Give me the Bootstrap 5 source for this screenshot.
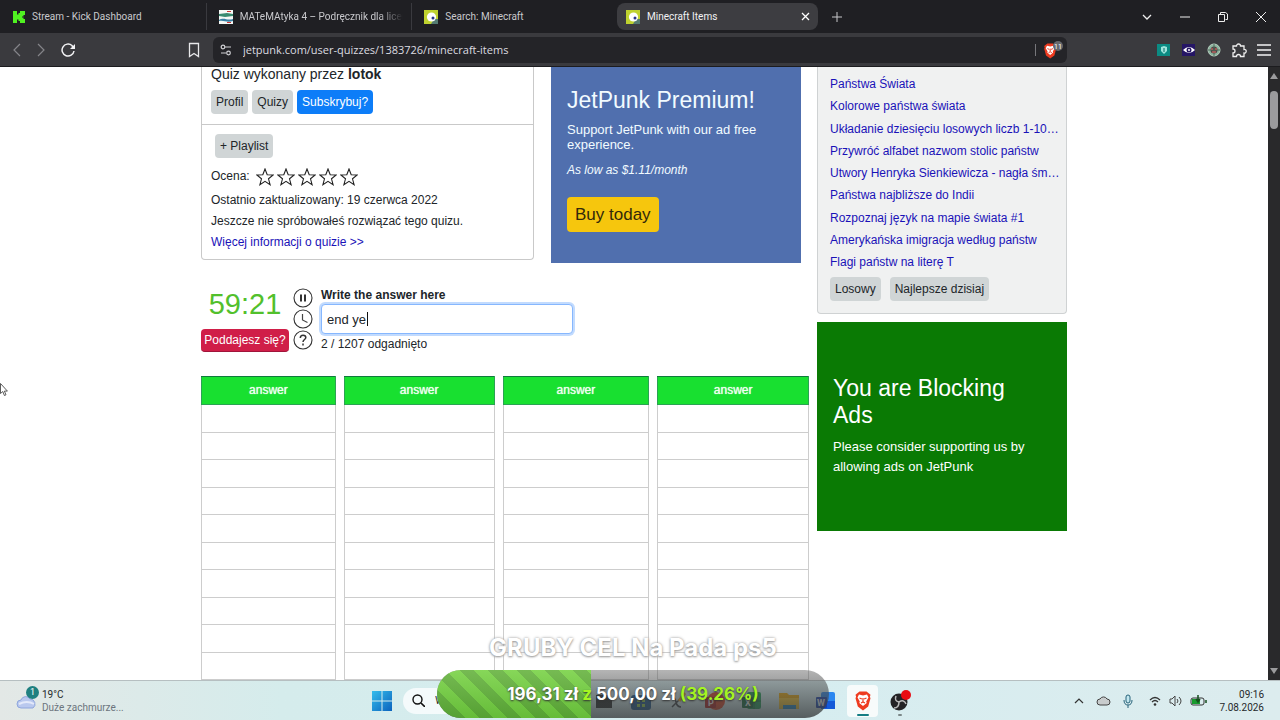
<!DOCTYPE html>
<html lang="pl">
<head>
<meta charset="utf-8">
<meta name="viewport" content="width=device-width, initial-scale=1">
<title>Minecraft Items</title>
<link href="https://cdn.jsdelivr.net/npm/bootstrap@5.3.0/dist/css/bootstrap.min.css" rel="stylesheet">
<style>
body{font-family:"Liberation Sans",Arial,sans-serif;font-size:12px;color:#212529;line-height:21px}
svg{display:block;flex:none}
button{border:0;background:none;padding:0;color:inherit}
.chrome-ui{font-family:Roboto,"Open Sans",sans-serif}
/* browser window */
.tabstrip{height:33px;background:#1f1f23;color:#c9c9cd;font-size:10px}
.tabs-row{flex:0 1 818px;min-width:0}
.browser-tab{flex:1 1 0;min-width:0;height:27px;padding:0 8px 0 13px;gap:7px;line-height:27px;text-align:left;white-space:nowrap;overflow:hidden}
.browser-tab span{overflow:hidden}
.tab-line{border-right:1px solid #3a3a3f}
.tab-on{background:#3d3d41;color:#f2f2f4;border-radius:8px;padding-left:9px;flex:0 1 201px}
.fade-end{-webkit-mask-image:linear-gradient(90deg,#000 85%,transparent)}
.win-btn{width:38px;height:33px;display:flex;align-items:center;justify-content:center}
.toolbar{height:34px;background:#3a3a3e;color:#e8e8ea;border-bottom:1px solid #1c1c1f}
.nav-side{flex:0 0 213px;padding:0 11px 0 9px}
.address{height:26px;background:#242428;border-radius:6px;padding:0 1px 0 6px}
.address input{background:none;border:0;color:#dcdce0;font-family:"Open Sans","Noto Sans",sans-serif;font-size:11px;min-width:0;outline:0}
.ext-row{flex:0 0 213px;padding-right:8px;gap:9px}
.ext-row button,.nav-side button{width:16px;height:16px}
/* page */
.viewport-area{min-height:0}
.site{max-width:866px;width:100%}
.main-col{min-width:0}
.side-col{flex:0 0 250px;width:250px}
.quiz-card{flex:0 0 333px;border:1px solid #c9c9c9;border-top:0;border-radius:0 0 4px 4px;height:193px}
.card-part{padding:0 9px}
.author{font-size:14px;line-height:14px;margin-bottom:9px}
.author-btns{gap:4px;padding-bottom:10px}
.gbtn{background:#d0d5d6;border-radius:4px;height:24px;line-height:24px;padding:0 5px;color:#212529}
.gbtn-blue{background:#0d7df8;color:#fff}
.rule{border-top:1px solid #c9c9c9;padding-top:9px}
.stars{gap:3px}
.rating{gap:6px;margin-bottom:3px}
.site a{color:#1a12b8;text-decoration:none}
.promo{flex:0 0 250px;background:#506fae;color:#f2fbff;height:196px;padding:20px 16px 0}
.promo h2,.adblock h2{font-size:23px;line-height:27px;font-weight:400}
.promo p{font-size:13px;line-height:15px}
.buy{background:#f6c60d;color:#33290a;font-size:17px;height:35px;border-radius:4px;padding:0 8px}
.play-row{margin-top:23px}
.timer{font-size:29px;line-height:36px;color:#52c02c}
.give-up{display:block;margin-top:7px;background:#d01e48;color:#fff;height:23px;border-radius:4px;line-height:23px;border-bottom:1px solid #a0143a;width:88px}
.play-icons{gap:1px;padding-top:2px;margin:0 8px 0 4px}
.answer-label{line-height:18px}
.answer-box{width:252px;height:30px;border:1px solid #86b7fe;border-radius:4px;box-shadow:0 0 0 2px #c2dbfe;padding:0 5px;font-size:13px;color:#212529;outline:0}
.caret{left:46px;top:8px;width:1px;height:14px;background:#111}
.answer-grid{display:grid;grid-template-columns:135fr 151fr 147fr 152fr;column-gap:8px;margin-top:21px}
.answer-grid table{width:100%;height:304px;border-collapse:collapse}
.answer-grid th{background:#18e030;color:#effff0;height:28px;padding:0;text-align:center;font-weight:400;border:1px solid #2aa352;border-top-color:#0f7a3c;text-shadow:0 0 1px #fff}
.answer-grid td{border:1px solid #cdcdcd;padding:0}
.more{background:#f0f1f1;border:1px solid #cfd2d3;border-top:0;border-radius:0 0 4px 4px;height:247px;padding:7px 12px 0}
.more ul{height:199px;line-height:21px;white-space:nowrap}
.more-btns{gap:9px}
.adblock{background:#0a7a04;color:#fff;height:209px;padding:53px 24px 0 16px;font-size:13px;line-height:20px}
.scroll{flex:0 0 12px;background:#29292b;padding:6px 0}
.thumb{width:8px;height:38px;border-radius:4px;background:#9b9b9d;margin-top:12px}
.pointer{left:0;top:383px}
/* desktop */
.taskbar{height:40px;background:linear-gradient(90deg,#e3e8e6,#d5ecec 22%,#d6edf0 60%,#dcecee);border-top:1px solid #b6bfc1;display:grid;grid-template-columns:1fr auto 1fr;align-items:center;color:#26292b;font-size:10px;line-height:13px}
.weather{padding-left:16px;gap:4px}
.weather-n{left:10px;top:-5px;width:13px;height:13px;border-radius:50%;background:#1e8080;color:#fff;font-size:9px;line-height:13px;text-align:center}
.app-cluster{padding-left:10px}
.search-pill{width:182px;height:26px;border-radius:13px;background:#f4fafb;padding:0 9px;margin:0 0 0 11px}
.search-pill input{border:0;background:none;width:120px;font-size:11px;outline:0;color:#333}
.task-icons button{width:37px;height:32px;display:flex;justify-content:center;align-items:center;position:relative}
.task-icons .running::after{content:"";position:absolute;bottom:1px;width:4px;height:2px;border-radius:1px;background:#7b8788}
.task-icons .active-app{background:#f7fbfb;border-radius:4px;width:31px;margin:0 3px}
.task-icons .active-app::after{width:12px;background:#147d84}
.tray{padding-right:16px;gap:8px}
/* donation goal */
.goal{right:14px;bottom:2px;pointer-events:none;font-family:Inter,"Open Sans",sans-serif}
.goal-title{color:#fff;font-size:24px;line-height:28px;font-weight:700;text-shadow:0 0 3px #999,0 1px 2px #aaa}
.goal-bar{width:392px;height:48px;border-radius:24px;overflow:hidden;background:linear-gradient(rgba(90,90,90,.45),rgba(58,62,63,.82))}
.goal-fill{background:linear-gradient(rgba(255,255,255,.12),rgba(0,60,0,.14)),repeating-linear-gradient(45deg,#76d142 0 10px,#63b13b 10px 20px)}
.goal-text{font-size:17px;font-weight:700;color:#fff;line-height:48px;text-shadow:0 1px 2px #333}
.goal-text b{font-weight:700;color:#a4f522}
</style>
</head>
<body class="vh-100 d-flex flex-column overflow-hidden bg-white">
<svg width="0" height="0" class="position-absolute"><defs>
<g id="jet"><rect width="14" height="14" fill="#bfd22f"/><path d="M10 9h4v5H7z" fill="#547b72"/><circle cx="7.500" cy="7" r="4.600" fill="#fff"/><circle cx="9" cy="8" r="1.500" fill="#27348b"/></g>
<path id="star" d="M9 1l2.200 5.700 6 .3-4.700 3.800 1.600 5.900L9 13.400l-5.100 3.300 1.600-5.900L.8 7l6-.3z" fill="none" stroke="#222" stroke-width="1.100"/>
<g id="lion"><path d="M3 2.500L5.500.5h7L15 2.500l1.500 1.300-.6 2 .6 1.400-2.300 8.300L9 19.500l-5.200-4L1.500 7.200l.6-1.400-.6-2z" fill="#ee3b20"/><path d="M5 3.500l4 .9 4-.9 1.500 3-2.300 4 .5 1.500-3.700 3-3.700-3 .5-1.500-2.300-4z" fill="#fff"/><path d="M5.500 7l2.400 1M12.500 7l-2.400 1M9 7v3.500M7 12l2-1 2 1" stroke="#ee3b20" stroke-width="1.200" fill="none"/></g>
</defs></svg>

<header class="chrome-ui flex-shrink-0">
  <div class="tabstrip d-flex align-items-center">
    <nav class="tabs-row d-flex align-items-center" aria-label="Karty">
      <button class="browser-tab tab-line d-flex align-items-center"><svg width="12" height="12" viewBox="0 0 12 12"><path d="M0 0h4v3.500h1.500V2H7V0h5v4h-1.500v1.500H9v1h1.500V8H12v4H7v-2H5.500V8.500H4V12H0z" fill="#50f221"/></svg><span>Stream - Kick Dashboard</span></button>
      <button class="browser-tab tab-line d-flex align-items-center ps-2 ms-1"><svg width="14" height="14" viewBox="0 0 14 14"><rect width="14" height="14" fill="#f5f8f5"/><path d="M0 4l8-1 6 1v2l-8 1-6-1z" fill="#3a8b70"/><path d="M0 10c5-3 8 1 14-1v2c-6 2-9-1-14 0z" fill="#387fa3"/><path d="M8 1h4v1H8zM8 12h4v1H8z" fill="#c33"/></svg><span class="fade-end">MATeMAtyka 4 – Podręcznik dla liceu</span></button>
      <button class="browser-tab d-flex align-items-center ps-2 ms-1"><svg width="14" height="14"><use href="#jet"/></svg><span>Search: Minecraft</span></button>
      <button class="browser-tab tab-on d-flex align-items-center"><svg width="14" height="14"><use href="#jet"/></svg><span class="flex-grow-1">Minecraft Items</span><svg width="9" height="9"><path d="M1 1l7 7M8 1L1 8" stroke="#fff" stroke-width="1.300"/></svg></button>
    </nav>
    <button class="win-btn" aria-label="Nowa karta"><svg width="10" height="10"><path d="M5 0v10M0 5h10" stroke="#c8c8cb"/></svg></button>
    <div class="d-flex ms-auto">
      <button class="win-btn" aria-label="Lista kart"><svg width="10" height="6"><path d="M1 1l4 4 4-4" fill="none" stroke="#eee" stroke-width="1.300"/></svg></button>
      <button class="win-btn" aria-label="Minimalizuj"><svg width="10" height="2"><path d="M0 1h10" stroke="#eee"/></svg></button>
      <button class="win-btn" aria-label="Przywróć"><svg width="10" height="10"><path d="M.5 2.500h6v7h-6zM2.500 2V.5h5l2 1.500v5.500h-2" fill="none" stroke="#eee"/></svg></button>
      <button class="win-btn" aria-label="Zamknij"><svg width="10" height="10"><path d="M0 0l10 10M10 0L0 10" stroke="#eee"/></svg></button>
    </div>
  </div>
  <div class="toolbar d-flex align-items-center">
    <div class="nav-side d-flex align-items-center">
      <button class="me-2" aria-label="Wstecz"><svg width="16" height="16"><path d="M11 2L5 8l6 6" fill="none" stroke="#85858a" stroke-width="1.200"/></svg></button>
      <button class="me-2" aria-label="Dalej"><svg width="16" height="16"><path d="M5 2l6 6-6 6" fill="none" stroke="#85858a" stroke-width="1.200"/></svg></button>
      <button class="ms-1" aria-label="Odśwież"><svg width="16" height="16"><path d="M13 9a6 6 0 1 1-2-5.500L12 6" fill="none" stroke="#f2f2f4" stroke-width="1.500"/><path d="M14 2v5H9z" fill="#f2f2f4"/></svg></button>
      <button class="ms-auto" aria-label="Zakładka"><svg width="16" height="16"><path d="M3.500 1.500h9v13L8 11.500l-4.500 3z" fill="none" stroke="#e8e8ea" stroke-width="1.300"/></svg></button>
    </div>
    <div class="address flex-grow-1 d-flex align-items-center">
      <svg width="14" height="14" viewBox="0 0 14 14"><g fill="none" stroke="#d0d0d4" stroke-width="1.200"><circle cx="4" cy="4" r="1.800"/><path d="M6 4h6M2 10h5"/><circle cx="9.500" cy="10" r="1.800"/></g></svg>
      <input class="flex-grow-1 ms-2" aria-label="Adres" value="jetpunk.com/user-quizzes/1383726/minecraft-items">
      <svg width="32" height="18"><path d="M1.500 3v12" stroke="#77777b"/><g transform="translate(9 2) scale(.8)"><use href="#lion"/></g><circle cx="24" cy="5" r="5" fill="#66686d"/><text x="20" y="8" font-size="7" fill="#fff">11</text></svg>
    </div>
    <div class="ext-row d-flex align-items-center justify-content-end">
      <button aria-label="Hasła"><svg width="16" height="16"><rect x="1" y="2" width="13" height="12" fill="#0b8b83"/><path d="M5 5l3-1 3 1v4l-3 3-3-3z" fill="#9fe5dd"/><path d="M7.500 6h1v4h-1z" fill="#0b6b66"/></svg></button>
      <button aria-label="Podgląd"><svg width="16" height="16"><rect x="1" y="2" width="13" height="12" fill="#251665"/><path d="M2 8q6-6 12 0-6 6-12 0z" fill="#fff"/><circle cx="8" cy="8" r="2.500" fill="#251665"/><circle cx="8" cy="8" r="1" fill="#fff"/></svg></button>
      <button aria-label="Rozszerzenie"><svg width="16" height="16"><circle cx="8" cy="8" r="6" fill="#8fb5a0" stroke="#b8d3c2"/><circle cx="8" cy="8" r="3.500" fill="#4a4545"/><path d="M8 2v12M2 8h12" stroke="#4e6b5b"/><path d="M5 7h2M9 7h2M6 10h4" stroke="#e66"/></svg></button>
      <button aria-label="Rozszerzenia"><svg width="16" height="16"><path d="M2 4h3.500a2 2 0 1 1 4 0H13v3.500a1.800 1.800 0 1 1 0 3.500v3.500H9.500a2 2 0 0 0-4 0H2V11a2 2 0 0 0 0-4z" fill="none" stroke="#eee" stroke-width="1.300"/></svg></button>
      <button aria-label="Menu"><svg width="16" height="16"><path d="M1 3h14M1 8h14M1 13h14" stroke="#f2f2f4" stroke-width="1.300"/></svg></button>
    </div>
  </div>
</header>

<div class="viewport-area d-flex flex-grow-1 overflow-hidden">
  <main class="flex-grow-1 d-flex justify-content-center overflow-hidden">
    <div class="site d-flex gap-2">
      <div class="main-col flex-grow-1">
        <div class="d-flex justify-content-between pe-2">
          <section class="quiz-card">
            <div class="card-part">
              <div class="author">Quiz wykonany przez <strong>lotok</strong></div>
              <div class="author-btns d-flex"><button class="gbtn">Profil</button><button class="gbtn">Quizy</button><button class="gbtn gbtn-blue">Subskrybuj?</button></div>
            </div>
            <div class="card-part rule">
              <button class="gbtn ms-1 mb-2">+ Playlist</button>
              <div class="rating d-flex align-items-center"><span>Ocena:</span>
                <span class="stars d-flex"><svg width="18" height="18"><use href="#star"/></svg><svg width="18" height="18"><use href="#star"/></svg><svg width="18" height="18"><use href="#star"/></svg><svg width="18" height="18"><use href="#star"/></svg><svg width="18" height="18"><use href="#star"/></svg></span>
              </div>
              <div>Ostatnio zaktualizowany: 19 czerwca 2022</div>
              <div>Jeszcze nie spróbowałeś rozwiązać tego quizu.</div>
              <a href="#">Więcej informacji o quizie &gt;&gt;</a>
            </div>
          </section>
          <section class="promo">
            <h2 class="mb-2">JetPunk Premium!</h2>
            <p class="mb-2">Support JetPunk with our ad free experience.</p>
            <em class="d-block mb-3">As low as $1.11/month</em>
            <button class="buy">Buy today</button>
          </section>
        </div>
        <section class="play-row d-flex">
          <div class="text-center">
            <div class="timer">59:21</div>
            <button class="give-up">Poddajesz się?</button>
          </div>
          <div class="play-icons d-flex flex-column">
            <button class="d-block" aria-label="Pauza"><svg width="20" height="20"><circle cx="10" cy="10" r="9" fill="none" stroke="#333" stroke-width="1.100"/><path d="M8 6.500v7M12 6.500v7" stroke="#333" stroke-width="2"/></svg></button>
            <button class="d-block" aria-label="Czas"><svg width="20" height="20"><circle cx="10" cy="10" r="9" fill="none" stroke="#333" stroke-width="1.100"/><path d="M9.500 5v6l5 2.500" fill="none" stroke="#444" stroke-width="1.200"/></svg></button>
            <button class="d-block" aria-label="Pomoc"><svg width="20" height="20"><circle cx="10" cy="10" r="9" fill="none" stroke="#333" stroke-width="1.100"/><path d="M7.300 8c0-4 5.500-3.500 5.500-.5C12.800 9.500 10 9.500 10 12M10 13.500v2" fill="none" stroke="#333" stroke-width="1.500"/></svg></button>
          </div>
          <div>
            <label for="answer" class="answer-label d-block fw-bold">Write the answer here</label>
            <div class="position-relative"><input id="answer" class="answer-box d-block" value="end ye" autocomplete="off"><span class="caret position-absolute"></span></div>
            <div>2 / 1207 odgadnięto</div>
          </div>
        </section>
        <div class="answer-grid" id="answers"></div>
      </div>
      <aside class="side-col">
        <section class="more mb-2">
          <ul class="list-unstyled d-flex flex-column justify-content-between mb-1">
            <li><a href="#">Państwa Świata</a></li>
            <li><a href="#">Kolorowe państwa świata</a></li>
            <li><a href="#">Układanie dziesięciu losowych liczb 1-10…</a></li>
            <li><a href="#">Przywróć alfabet nazwom stolic państw</a></li>
            <li><a href="#">Utwory Henryka Sienkiewicza - nagła śm…</a></li>
            <li><a href="#">Państwa najbliższe do Indii</a></li>
            <li><a href="#">Rozpoznaj język na mapie świata #1</a></li>
            <li><a href="#">Amerykańska imigracja według państw</a></li>
            <li><a href="#">Flagi państw na literę T</a></li>
          </ul>
          <div class="more-btns d-flex"><button class="gbtn">Losowy</button><button class="gbtn">Najlepsze dzisiaj</button></div>
        </section>
        <section class="adblock">
          <h2 class="mb-2">You are Blocking Ads</h2>
          <p class="mb-0">Please consider supporting us by allowing ads on JetPunk</p>
        </section>
      </aside>
    </div>
  </main>
  <div class="scroll d-flex flex-column align-items-center"><svg width="8" height="6"><path d="M4 0l4 6H0z" fill="#9b9b9d"/></svg><div class="thumb"></div><svg class="mt-auto" width="8" height="6"><path d="M0 0h8L4 6z" fill="#9b9b9d"/></svg></div>
</div>

<footer class="taskbar chrome-ui flex-shrink-0">
  <div class="weather d-flex align-items-center">
    <span class="position-relative"><svg width="22" height="20"><path d="M5 17a4 4 0 0 1 0-8 5 5 0 0 1 9-1 5 5 0 0 1 3 9z" fill="#b9c8ee" stroke="#8ea6dd"/><path d="M3 13q8-4 15 0" stroke="#e3e9fa" stroke-width="2" fill="none"/></svg><span class="weather-n position-absolute">1</span></span>
    <span>19°C<br><span class="text-secondary">Duże zachmurze...</span></span>
  </div>
  <div class="app-cluster d-flex align-items-center">
    <button aria-label="Start"><svg width="20" height="20"><defs><linearGradient id="w" x2="1" y2="1"><stop stop-color="#35bdec"/><stop offset="1" stop-color="#0b62bd"/></linearGradient></defs><path d="M0 0h9.500v9.500H0zM10.500 0H20v9.500h-9.500zM0 10.500h9.500V20H0zM10.500 10.500H20V20h-9.500z" fill="url(#w)"/></svg></button>
    <div class="search-pill d-flex align-items-center"><svg width="13" height="13"><circle cx="5.500" cy="5.500" r="4.500" fill="none" stroke="#111" stroke-width="1.400"/><path d="M9 9l4 4" stroke="#111" stroke-width="1.600"/></svg><input class="ms-2" value="Wyszukaj" aria-label="Wyszukaj"></div>
    <div class="task-icons d-flex">
      <button aria-label="Terminal"><svg width="16" height="16"><path d="M0 2h12l4 4v9H0z" fill="#181b1c"/></svg></button>
      <button aria-label="Sklep"><svg width="20" height="18"><rect y="3" width="20" height="15" rx="3" fill="#12518f"/><path d="M6 3V1h8v2" stroke="#6eb1e6" fill="none"/><path d="M6 7h3v3H6zM11 7h3v3h-3zM6 12h3v3H6zM11 12h3v3h-3z" fill="#9edb46"/></svg></button>
      <button aria-label="Matematyka"><svg width="18" height="18"><path d="M3 5q3 0 4 5t5 5M13 5L3 15" stroke="#34373a" stroke-width="1.500" fill="none"/><path d="M10 9l6-8" stroke="#efa52b" stroke-width="3"/></svg></button>
      <button aria-label="PowerPoint"><svg width="20" height="20"><circle cx="11" cy="10" r="9" fill="#e53b18"/><rect y="6" width="11" height="11" rx="1" fill="#b41310"/><text x="3" y="15" font-size="9" font-weight="700" fill="#fff">P</text></svg></button>
      <button aria-label="Excel"><svg width="20" height="20"><rect x="5" y="1" width="14" height="17" rx="2" fill="#16a052"/><path d="M12 1v17M5 10h14" stroke="#126b39"/><rect y="6" width="11" height="11" rx="1" fill="#0b6632"/><text x="3" y="15" font-size="9" font-weight="700" fill="#fff">X</text></svg></button>
      <button aria-label="Pliki"><svg width="22" height="20"><path d="M1 2h8l2 2h10v14H1z" fill="#f0a800"/><path d="M1 7h20v11H1z" fill="#ffc928"/><path d="M5 14h13v4H5z" fill="#1787cf"/></svg></button>
      <button aria-label="Word"><svg width="20" height="20"><rect x="5" y="1" width="14" height="17" rx="2" fill="#2a86f0"/><path d="M5 10h14v8H5z" fill="#1459d8"/><rect y="6" width="11" height="11" rx="1" fill="#153db1"/><text x="1" y="15" font-size="9" font-weight="700" fill="#fff">W</text></svg></button>
      <button class="active-app running" aria-label="Brave"><svg width="18" height="20"><use href="#lion"/></svg></button>
      <button class="running" aria-label="OBS"><svg width="22" height="22"><circle cx="10" cy="12" r="8.500" fill="#242326"/><path d="M10 12q-5-1-3-6M10 12q5-3 7 2M10 12q0 6-5 6" stroke="#bbb" stroke-width="1.500" fill="none"/><circle cx="17" cy="5" r="5" fill="#e80b12"/></svg></button>
    </div>
  </div>
  <div class="tray d-flex align-items-center justify-content-end">
    <svg width="10" height="6"><path d="M1 5l4-4 4 4" fill="none" stroke="#333" stroke-width="1.200"/></svg>
    <svg class="ms-1" width="15" height="11"><path d="M4 10a3 3 0 0 1 0-6 4 4 0 0 1 7 0 3 3 0 0 1 0 6z" fill="#c8cccd" stroke="#444"/></svg>
    <svg class="ms-1" width="10" height="14"><rect x="3" y="1" width="4" height="8" rx="2" fill="#c2e7ef" stroke="#26637a"/><path d="M1 6q0 5 4 5t4-5M5 11v3" stroke="#26637a" fill="none"/></svg>
    <svg class="ms-2" width="12" height="10"><path d="M1 4q5-5 10 0M3 6q3-3 6 0" stroke="#333" stroke-width="1.200" fill="none"/><circle cx="6" cy="8.500" r="1.300" fill="#333"/></svg>
    <svg width="13" height="12"><path d="M1 4h2l3-3v10L3 8H1zM8 4q2 2 0 4M10 2q4 4 0 8" stroke="#444" fill="none"/></svg>
    <svg width="17" height="12"><rect x="1" y="3" width="13" height="7" rx="2" fill="none" stroke="#333"/><rect x="2" y="4" width="8" height="5" fill="#169b2d"/><path d="M8 0v6M6 4l2 3 2-3M16 5v3" stroke="#154e1c" stroke-width="1.500" fill="none"/></svg>
    <time class="text-end ms-1">09:16<br>7.08.2026</time>
  </div>
</footer>

<svg class="pointer position-absolute" width="8" height="14"><path d="M.5.500v10l2.300-2 1.600 4 1.600-.7-1.600-3.700h3z" fill="#fff" stroke="#333" stroke-width=".8"/></svg>

<div class="goal position-absolute start-0 d-flex flex-column align-items-center">
  <div class="goal-title mb-2">GRUBY CEL Na Pada ps5</div>
  <div class="goal-bar position-relative">
    <div class="goal-fill h-100" style="width:39.26%"></div>
    <div class="goal-text position-absolute top-0 start-0 w-100 text-center">196,31 zł <b>z</b> 500,00 zł <b>(39.26%)</b></div>
  </div>
</div>

<script>
const row = '<tr><td></td></tr>';
document.getElementById('answers').innerHTML =
  ('<table><thead><tr><th scope="col">answer</th></tr></thead><tbody>' + row.repeat(10) + '</tbody></table>').repeat(4);
</script>
<script src="https://cdn.jsdelivr.net/npm/bootstrap@5.3.0/dist/js/bootstrap.bundle.min.js"></script>
</body>
</html>
